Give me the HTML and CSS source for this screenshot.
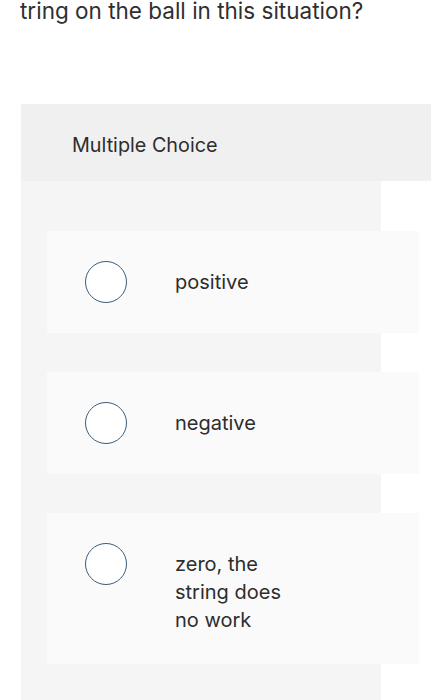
FILE: index.html
```html
<!DOCTYPE html>
<html lang="en">
<head>
<meta charset="utf-8">
<title>Multiple Choice</title>
<link rel="stylesheet" href="styles.css">
</head>
<body>
<p class="question">tring on the ball in this situation?</p>
<section class="mc">
  <div class="mc-header">Multiple Choice</div>
  <div class="mc-body">
    <label class="option">
      <span class="radio"></span>
      <span class="option-text">positive</span>
    </label>
    <label class="option">
      <span class="radio"></span>
      <span class="option-text">negative</span>
    </label>
    <label class="option">
      <span class="radio"></span>
      <span class="option-text">zero, the string does no work</span>
    </label>
  </div>
</section>
</body>
</html>
```
FILE: styles.css
```css
html, body {
  margin: 0;
  padding: 0;
  background: #ffffff;
}
body {
  font-family: Inter, Lato, sans-serif;
  color: #2d2d2d;
  overflow: hidden;
}
.question {
  margin: 0;
  padding: 2px 0 0 20px;
  font-size: 22.5px;
  line-height: 18px;
  height: 104px;
  box-sizing: border-box;
  color: #2f2f2f;
}
.mc {
  margin-left: 21px;
  width: 410px;
}
.mc-header {
  height: 77px;
  box-sizing: border-box;
  background: #f0f0f0;
  padding: 4px 0 0 51px;
  display: flex;
  align-items: center;
  font-size: 19.8px;
}
.mc-body {
  width: 360px;
  background: #f5f5f5;
  padding: 50px 0 60px 26px;
  box-sizing: border-box;
  display: flex;
  flex-direction: column;
  gap: 39px;
}
.option {
  width: 372px;
  flex: none;
  box-sizing: border-box;
  background: #fafafa;
  padding: 30px 0 30px 38px;
  display: flex;
  align-items: flex-start;
  gap: 48px;
}
.radio {
  width: 42px;
  height: 42px;
  box-sizing: border-box;
  border: 1.5px solid #3c5d7c;
  border-radius: 50%;
  background: #ffffff;
  flex: none;
}
.option-text {
  width: 118px;
  margin-top: 7px;
  font-size: 20px;
  line-height: 28px;
}
```
